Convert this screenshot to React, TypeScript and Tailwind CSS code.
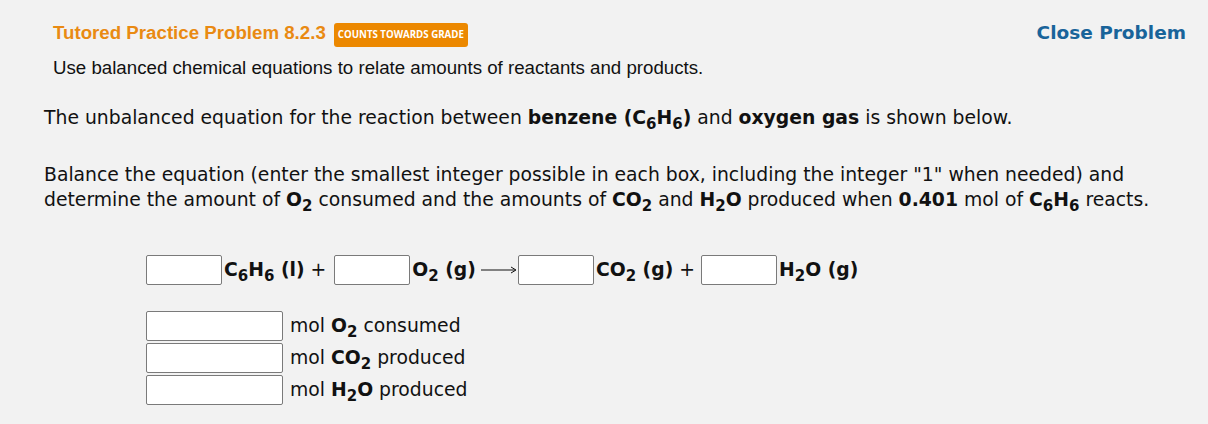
import React from "react";

const Sub = ({ children }: { children: React.ReactNode }) => (
  <sub className="text-[0.8em] align-[-0.3em] leading-none" style={{ position: "static" }}>
    {children}
  </sub>
);

const Box = ({ w }: { w: string }) => (
  <span className={`inline-block ${w} h-[30px] bg-white border border-[#7a7a7a] rounded-[2px] align-middle shrink-0`} />
);

export default function App() {
  return (
    <div className="w-[1208px] h-[424px] bg-[#f2f2f2] text-[#111] overflow-hidden" style={{ fontFamily: '"DejaVu Sans", Verdana, sans-serif' }}>
      <div className="flex items-center justify-between pl-[53px] pr-[22px] pt-[19px]">
        <div className="flex items-center gap-[8px]">
          <span className="text-[18.7px] font-bold text-[#e98a12]" style={{ fontFamily: '"Liberation Sans", Arial, sans-serif' }}>
            Tutored Practice Problem 8.2.3
          </span>
          <span className="bg-[#ec8800] text-white text-[9.7px] font-bold rounded-[3px] px-[4px] h-[24px] flex items-center mt-[4px]" style={{ fontFamily: '"Open Sans", sans-serif' }}>
            COUNTS TOWARDS GRADE
          </span>
        </div>
        <span className="text-[18.5px] font-bold text-[#19649a]">Close Problem</span>
      </div>
      <div className="pl-[53px] mt-[7px] text-[18.7px]" style={{ fontFamily: '"Liberation Sans", Arial, sans-serif' }}>
        Use balanced chemical equations to relate amounts of reactants and products.
      </div>
      <div className="pl-[44px] text-[18.8px] mt-[23px] leading-[25px]">
        The unbalanced equation for the reaction between <b>benzene (C<Sub>6</Sub>H<Sub>6</Sub>)</b> and <b>oxygen gas</b> is shown below.
      </div>
      <div className="pl-[44px] text-[18.8px] mt-[30px] leading-[25px]">
        Balance the equation (enter the smallest integer possible in each box, including the integer "1" when needed) and
        <br />
        determine the amount of <b>O<Sub>2</Sub></b> consumed and the amounts of <b>CO<Sub>2</Sub></b> and <b>H<Sub>2</Sub>O</b> produced when <b>0.401</b> mol of <b>C<Sub>6</Sub>H<Sub>6</Sub></b> reacts.
      </div>
      <div className="pl-[146px] mt-[42px] flex items-center text-[18.8px] h-[30px] whitespace-nowrap">
        <Box w="w-[76px]" />
        <span className="ml-[2px]"><b>C<Sub>6</Sub>H<Sub>6</Sub> (l)</b> + </span>
        <span className="ml-[8px]" />
        <Box w="w-[76px]" />
        <span className="ml-[2px]"><b>O<Sub>2</Sub> (g)</b></span>
        <svg width="36" height="10" viewBox="0 0 36 10" className="ml-[5px] shrink-0">
          <line x1="0" y1="5" x2="34" y2="5" stroke="#111" strokeWidth="1" />
          <path d="M30 2 L35 5 L30 8" fill="none" stroke="#111" strokeWidth="1" />
        </svg>
        <span className="ml-[1px]" />
        <Box w="w-[76px]" />
        <span className="ml-[2px]"><b>CO<Sub>2</Sub> (g)</b> + </span>
        <span className="ml-[6px]" />
        <Box w="w-[76px]" />
        <span className="ml-[2px]"><b>H<Sub>2</Sub>O (g)</b></span>
      </div>
      <div className="pl-[146px] mt-[26px] flex flex-col gap-[2px] text-[18.8px]">
        {[
          <>mol <b>O<Sub>2</Sub></b> consumed</>,
          <>mol <b>CO<Sub>2</Sub></b> produced</>,
          <>mol <b>H<Sub>2</Sub>O</b> produced</>,
        ].map((t, i) => (
          <div key={i} className="flex items-center h-[30px]">
            <Box w="w-[137px]" />
            <span className="ml-[7px]">{t}</span>
          </div>
        ))}
      </div>
    </div>
  );
}
